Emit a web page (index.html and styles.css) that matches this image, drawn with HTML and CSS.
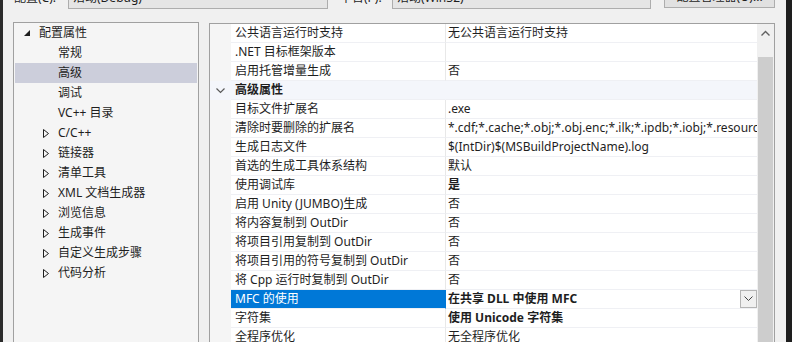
FILE: index.html
```html
<!DOCTYPE html>
<html lang="zh-CN">
<head>
<meta charset="utf-8">
<title>属性页</title>
<link rel="stylesheet" href="styles.css">
</head>
<body>
<div class="window">
  <div class="edge-left"></div>
  <div class="dialog">
    <div class="topbar">
      <span class="label lbl-config">配置(C):</span>
      <div class="combo combo-config"><span>活动(Debug)</span></div>
      <span class="label lbl-platform">平台(P):</span>
      <div class="combo combo-platform"><span>活动(Win32)</span></div>
      <div class="button">配置管理器(O)...</div>
    </div>
    <div class="main">
      <div class="tree">
        <div class="node lvl0"><span class="toggle"><svg width="6" height="6" viewBox="0 0 6 6"><polygon points="6,0 6,6 0,6" fill="#1e1e1e"/></svg></span><span>配置属性</span></div>
        <div class="node lvl1"><span class="toggle"></span><span>常规</span></div>
        <div class="node lvl1 selected"><span class="toggle"></span><span>高级</span></div>
        <div class="node lvl1"><span class="toggle"></span><span>调试</span></div>
        <div class="node lvl1"><span class="toggle"></span><span>VC++ 目录</span></div>
        <div class="node lvl1"><span class="toggle"><svg width="6" height="9" viewBox="0 0 6 9"><polygon points="0.5,0.5 5.5,4.5 0.5,8.5" fill="none" stroke="#1e1e1e" stroke-width="1"/></svg></span><span>C/C++</span></div>
        <div class="node lvl1"><span class="toggle"><svg width="6" height="9" viewBox="0 0 6 9"><polygon points="0.5,0.5 5.5,4.5 0.5,8.5" fill="none" stroke="#1e1e1e" stroke-width="1"/></svg></span><span>链接器</span></div>
        <div class="node lvl1"><span class="toggle"><svg width="6" height="9" viewBox="0 0 6 9"><polygon points="0.5,0.5 5.5,4.5 0.5,8.5" fill="none" stroke="#1e1e1e" stroke-width="1"/></svg></span><span>清单工具</span></div>
        <div class="node lvl1"><span class="toggle"><svg width="6" height="9" viewBox="0 0 6 9"><polygon points="0.5,0.5 5.5,4.5 0.5,8.5" fill="none" stroke="#1e1e1e" stroke-width="1"/></svg></span><span>XML 文档生成器</span></div>
        <div class="node lvl1"><span class="toggle"><svg width="6" height="9" viewBox="0 0 6 9"><polygon points="0.5,0.5 5.5,4.5 0.5,8.5" fill="none" stroke="#1e1e1e" stroke-width="1"/></svg></span><span>浏览信息</span></div>
        <div class="node lvl1"><span class="toggle"><svg width="6" height="9" viewBox="0 0 6 9"><polygon points="0.5,0.5 5.5,4.5 0.5,8.5" fill="none" stroke="#1e1e1e" stroke-width="1"/></svg></span><span>生成事件</span></div>
        <div class="node lvl1"><span class="toggle"><svg width="6" height="9" viewBox="0 0 6 9"><polygon points="0.5,0.5 5.5,4.5 0.5,8.5" fill="none" stroke="#1e1e1e" stroke-width="1"/></svg></span><span>自定义生成步骤</span></div>
        <div class="node lvl1"><span class="toggle"><svg width="6" height="9" viewBox="0 0 6 9"><polygon points="0.5,0.5 5.5,4.5 0.5,8.5" fill="none" stroke="#1e1e1e" stroke-width="1"/></svg></span><span>代码分析</span></div>
      </div>
      <div class="grid">
        <div class="rows">
          <div class="row"><div class="gutter"></div><div class="name">公共语言运行时支持</div><div class="value">无公共语言运行时支持</div></div>
          <div class="row"><div class="gutter"></div><div class="name">.NET 目标框架版本</div><div class="value"></div></div>
          <div class="row"><div class="gutter"></div><div class="name">启用托管增量生成</div><div class="value">否</div></div>
          <div class="row category"><div class="gutter"><svg width="9" height="6" viewBox="0 0 9 6"><polyline points="0.5,0.5 4.5,4.5 8.5,0.5" fill="none" stroke="#5a5a5a" stroke-width="1.2"/></svg></div><div class="name">高级属性</div><div class="value"></div></div>
          <div class="row"><div class="gutter"></div><div class="name">目标文件扩展名</div><div class="value">.exe</div></div>
          <div class="row"><div class="gutter"></div><div class="name">清除时要删除的扩展名</div><div class="value">*.cdf;*.cache;*.obj;*.obj.enc;*.ilk;*.ipdb;*.iobj;*.resources;*.tlb;*.tli;*.tlh;*.tmp;*.rsp;*.pgc;*.pgd;*.meta;*.tlog</div></div>
          <div class="row"><div class="gutter"></div><div class="name">生成日志文件</div><div class="value">$(IntDir)$(MSBuildProjectName).log</div></div>
          <div class="row"><div class="gutter"></div><div class="name">首选的生成工具体系结构</div><div class="value">默认</div></div>
          <div class="row"><div class="gutter"></div><div class="name">使用调试库</div><div class="value bold">是</div></div>
          <div class="row"><div class="gutter"></div><div class="name">启用 Unity (JUMBO)生成</div><div class="value">否</div></div>
          <div class="row"><div class="gutter"></div><div class="name">将内容复制到 OutDir</div><div class="value">否</div></div>
          <div class="row"><div class="gutter"></div><div class="name">将项目引用复制到 OutDir</div><div class="value">否</div></div>
          <div class="row"><div class="gutter"></div><div class="name">将项目引用的符号复制到 OutDir</div><div class="value">否</div></div>
          <div class="row"><div class="gutter"></div><div class="name">将 Cpp 运行时复制到 OutDir</div><div class="value">否</div></div>
          <div class="row selected"><div class="gutter"></div><div class="name">MFC 的使用</div><div class="value bold"><span class="vtext">在共享 DLL 中使用 MFC</span><span class="dropbtn"><svg width="9" height="6" viewBox="0 0 9 6"><polyline points="0.5,0.5 4.5,4.5 8.5,0.5" fill="none" stroke="#444" stroke-width="1"/></svg></span></div></div>
          <div class="row"><div class="gutter"></div><div class="name">字符集</div><div class="value bold">使用 Unicode 字符集</div></div>
          <div class="row"><div class="gutter"></div><div class="name">全程序优化</div><div class="value">无全程序优化</div></div>
          <div class="row"><div class="gutter"></div><div class="name">MSVC 工具集版本</div><div class="value">默认</div></div>
        </div>
        <div class="scrollbar">
          <div class="sb-arrow"><svg width="9" height="6" viewBox="0 0 9 6"><polyline points="0.5,5.5 4.5,1.5 8.5,5.5" fill="none" stroke="#606060" stroke-width="1.4"/></svg></div>
          <div class="sb-track"></div>
          <div class="sb-thumb"></div>
        </div>
      </div>
    </div>
  </div>
  <div class="edge-right"></div>
</div>
</body>
</html>
```

FILE: styles.css
```css
* { box-sizing: border-box; }
html, body { margin: 0; padding: 0; }
body {
  width: 792px;
  height: 342px;
  overflow: hidden;
  font-family: "Noto Sans", "Noto Sans CJK SC", sans-serif;
  font-size: 12px;
  color: #1e1e1e;
  background: #f0f0f0;
}
.window {
  display: flex;
  width: 792px;
  height: 342px;
  overflow: hidden;
}
.edge-left { width: 3px; background: #2b2b2b; flex: none; }
.edge-right { width: 6px; background: #1e1e1e; flex: none; }
.dialog {
  flex: 1;
  background: #f0f0f0;
  display: flex;
  flex-direction: column;
  overflow: hidden;
}

/* top bar (cut off at top) */
.topbar {
  display: flex;
  align-items: stretch;
  height: 23px;
  margin-top: -14px;
  padding-left: 10px;
  flex: none;
}
.label {
  display: flex;
  align-items: center;
  line-height: 1;
}
.lbl-config { width: 55px; padding-left: 1px; }
.lbl-platform { width: 64px; padding-left: 12px; }
.combo {
  display: flex;
  align-items: center;
  background: #e5e5e5;
  border: 1px solid #adadad;
  padding-left: 4px;
  line-height: 1;
}
.combo-config { width: 260px; }
.combo-platform { width: 259px; }
.button {
  display: flex;
  align-items: center;
  justify-content: center;
  margin-left: 13px;
  width: 111px;
  height: 22px;
  background: #e1e1e1;
  border: 1px solid #adadad;
  line-height: 1;
}

/* main area */
.main {
  display: flex;
  align-items: flex-start;
  margin-top: 13px;
  padding-left: 10px;
  flex: 1;
  min-height: 0;
}

/* tree */
.tree {
  width: 186px;
  height: 340px;
  border: 1px solid #a0a0a0;
  background: #f5f5f5;
  padding: 0 1px;
  flex: none;
}
.node {
  display: flex;
  align-items: center;
  height: 20px;
  line-height: 20px;
  white-space: nowrap;
}
.node.lvl0 { padding-left: 9px; }
.node.lvl0 .toggle { width: 15px; }
.node.lvl1 { padding-left: 28px; }
.node.lvl1 .toggle { width: 15px; }
.toggle {
  display: flex;
  align-items: center;
  height: 20px;
  flex: none;
}
.node.selected { background: #cccedb; }

/* property grid */
.grid {
  margin-left: 10px;
  margin-top: 1px;
  width: 566px;
  height: 340px;
  border: 1px solid #a0a0a0;
  background: #ffffff;
  display: flex;
  flex: none;
  overflow: hidden;
}
.rows {
  display: flex;
  flex-direction: column;
  width: 547px;
  flex: none;
}
.row {
  display: flex;
  height: 19px;
  flex: none;
}
.gutter {
  width: 21px;
  flex: none;
  background: #f5f5f5;
  display: flex;
  align-items: center;
  justify-content: center;
}
.name, .value {
  height: 19px;
  line-height: 18px;
  border-bottom: 1px solid #eff0f4;
  white-space: nowrap;
  overflow: hidden;
}
.name {
  width: 215px;
  flex: none;
  padding-left: 4px;
  border-right: 1px solid #e8e8e8;
}
.value {
  flex: 1;
  padding-left: 2px;
  display: flex;
  align-items: flex-start;
}
.bold { font-weight: bold; }
.category .name,
.category .value {
  background: #f4f6fb;
  font-weight: bold;
  border-right-color: #f4f6fb;
}
.category .gutter { background: #f4f6fb; }
.row.selected .name {
  background: #0078d7;
  color: #ffffff;
  border-right-color: #0078d7;
}
.vtext { flex: 1; }
.dropbtn {
  width: 17px;
  height: 18px;
  flex: none;
  border: 1px solid #b4b4b4;
  background: #f0f0f0;
  display: flex;
  align-items: center;
  justify-content: center;
}

/* scrollbar */
.scrollbar {
  width: 17px;
  flex: none;
  background: #f0f0f0;
  display: flex;
  flex-direction: column;
}
.sb-arrow {
  height: 17px;
  display: flex;
  align-items: center;
  justify-content: center;
}
.sb-track { height: 16px; }
.sb-thumb {
  flex: 1;
  margin: 0 1px 0 1px;
  background: #cdcdcd;
}
```
